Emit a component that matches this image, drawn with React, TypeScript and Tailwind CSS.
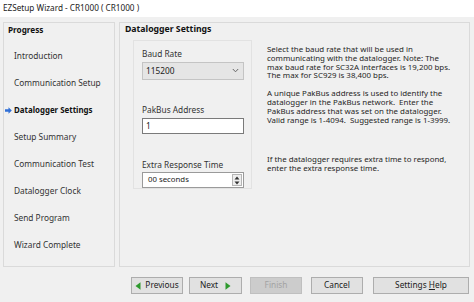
import React from "react";

const navItems = [
  "Introduction",
  "Communication Setup",
  "Datalogger Settings",
  "Setup Summary",
  "Communication Test",
  "Datalogger Clock",
  "Send Program",
  "Wizard Complete",
];

function BlueArrow() {
  return (
    <svg width="7" height="7" viewBox="0 0 7 7" className="mr-[2px]">
      <path d="M0 2.2 H3.5 V0.3 L6.8 3.5 L3.5 6.7 V4.8 H0 Z" fill="#2f6fd6" />
    </svg>
  );
}

function Btn({
  children,
  disabled,
  className,
}: {
  children: React.ReactNode;
  disabled?: boolean;
  className?: string;
}) {
  return (
    <div
      className={
        "h-[17px] flex items-center justify-center border text-[8.3px] " +
        (disabled
          ? "bg-[#cccccc] border-[#bfbfbf] text-[#a3a3a3] "
          : "bg-[#e1e1e1] border-[#adadad] text-[#222] ") +
        (className || "")
      }
    >
      {children}
    </div>
  );
}

export default function App() {
  return (
    <div
      className="w-[474px] h-[302px] bg-[#f0f0f0] flex flex-col overflow-hidden text-[#1e1e1e]"
      style={{ fontFamily: '"Noto Sans", "Open Sans", sans-serif' }}
    >
      {/* Title bar */}
      <div className="h-[17px] bg-white flex items-center pl-[3px] text-[8.2px] text-[#222] shrink-0">
        EZSetup Wizard - CR1000 ( CR1000 )
      </div>

      {/* Main */}
      <div className="flex pl-[3px] pt-[5px] gap-[4px] h-[251px] shrink-0">
        {/* Left panel */}
        <div className="w-[112px] h-[245px] border border-[#dadada] flex flex-col">
          <div className="h-[14px] flex items-center pl-[4px] text-[8.2px] font-bold text-[#111]">
            Progress
          </div>
          <div className="flex flex-col mt-[6px]">
            {navItems.map((t, i) => (
              <div
                key={t}
                className={
                  "h-[27px] flex items-center " +
                  (i === 2
                    ? "pl-[1px] font-bold text-[#111] text-[7.9px]"
                    : "pl-[10px] text-[#333] text-[8.3px]")
                }
              >
                {i === 2 && <BlueArrow />}
                {t}
              </div>
            ))}
          </div>
        </div>

        {/* Right panel */}
        <div className="w-[351px] h-[245px] border border-[#dadada] flex flex-col">
          <div className="h-[14px] flex items-center pl-[5px] text-[8.7px] font-bold text-[#111]">
            Datalogger Settings
          </div>
          <div className="flex mt-[3px]">
            {/* Fields box */}
            <div className="ml-[13px] w-[119px] h-[149px] border border-[#e2e2e2] flex flex-col pl-[8px]">
              <div className="mt-[8px] h-[11px] flex items-center text-[8.3px] text-[#333]">Baud Rate</div>
              <div className="mt-[2px] w-[102px] h-[18px] bg-[#e5e5e5] border border-[#c4c4c4] flex items-center justify-between pl-[3px] pr-[4px] text-[8.3px] text-[#222]">
                <span>115200</span>
                <svg width="7" height="5" viewBox="0 0 7 5">
                  <path d="M0.8 1 L3.5 3.8 L6.2 1" stroke="#666" strokeWidth="1" fill="none" />
                </svg>
              </div>
              <div className="mt-[25px] h-[11px] flex items-center text-[8.3px] text-[#333]">PakBus Address</div>
              <div className="mt-[2px] w-[102px] h-[17px] bg-white border border-[#7a7a7a] flex items-center pl-[3px] text-[8.3px] text-[#222]">
                1
              </div>
              <div className="mt-[25px] h-[11px] flex items-center text-[8.3px] text-[#333]">Extra Response Time</div>
              <div className="mt-[2px] w-[102px] h-[16px] bg-white border border-[#9a9a9a] flex items-center justify-between pl-[5px] pr-[1px] text-[7.8px] text-[#222]">
                <span>00 seconds</span>
                <div className="w-[10px] h-[12px] border border-[#b5b5b5] bg-[#eeeeee] flex flex-col items-center justify-center gap-[1px]">
                  <svg width="6" height="4" viewBox="0 0 6 4">
                    <path d="M0.5 3.5 L3 0.5 L5.5 3.5 Z" fill="#333" />
                  </svg>
                  <svg width="6" height="4" viewBox="0 0 6 4">
                    <path d="M0.5 0.5 L3 3.5 L5.5 0.5 Z" fill="#333" />
                  </svg>
                </div>
              </div>
            </div>

            {/* Help text */}
            <div className="ml-[15px] w-[200px] flex flex-col text-[7.9px] leading-[8.8px] text-[#262626]">
              <p className="mt-[5px]">
                Select the baud rate that will be used in
                <br />
                communicating with the datalogger. Note: The
                <br />
                max baud rate for SC32A interfaces is 19,200 bps.
                <br />
                The max for SC929 is 38,400 bps.
              </p>
              <p className="mt-[9px]">
                A unique PakBus address is used to identify the
                <br />
                datalogger in the PakBus network.&nbsp; Enter the
                <br />
                PakBus address that was set on the datalogger.
                <br />
                Valid range is 1-4094.&nbsp; Suggested range is 1-3999.
              </p>
              <p className="mt-[31px]">
                If the datalogger requires extra time to respond,
                <br />
                enter the extra response time.
              </p>
            </div>
          </div>
        </div>
      </div>

      {/* Bottom bar */}
      <div className="flex-1 flex pt-[9px] pl-[131px]">
        <Btn className="w-[52px] gap-[4px]">
          <svg width="6" height="8" viewBox="0 0 6 8">
            <path d="M5.5 0.3 L0.5 4 L5.5 7.7 Z" fill="#2e9a2e" />
          </svg>
          <span>Previous</span>
        </Btn>
        <Btn className="w-[53px] ml-[6px] gap-[7px]">
          <span>Next</span>
          <svg width="6" height="8" viewBox="0 0 6 8">
            <path d="M0.5 0.3 L5.5 4 L0.5 7.7 Z" fill="#2e9a2e" />
          </svg>
        </Btn>
        <Btn disabled className="w-[52px] ml-[8px]">
          Finish
        </Btn>
        <Btn className="w-[52px] ml-[9px]">Cancel</Btn>
        <Btn className="w-[96px] ml-[10px]">
          <span>
            Settings <span className="underline">H</span>elp
          </span>
        </Btn>
      </div>
    </div>
  );
}
